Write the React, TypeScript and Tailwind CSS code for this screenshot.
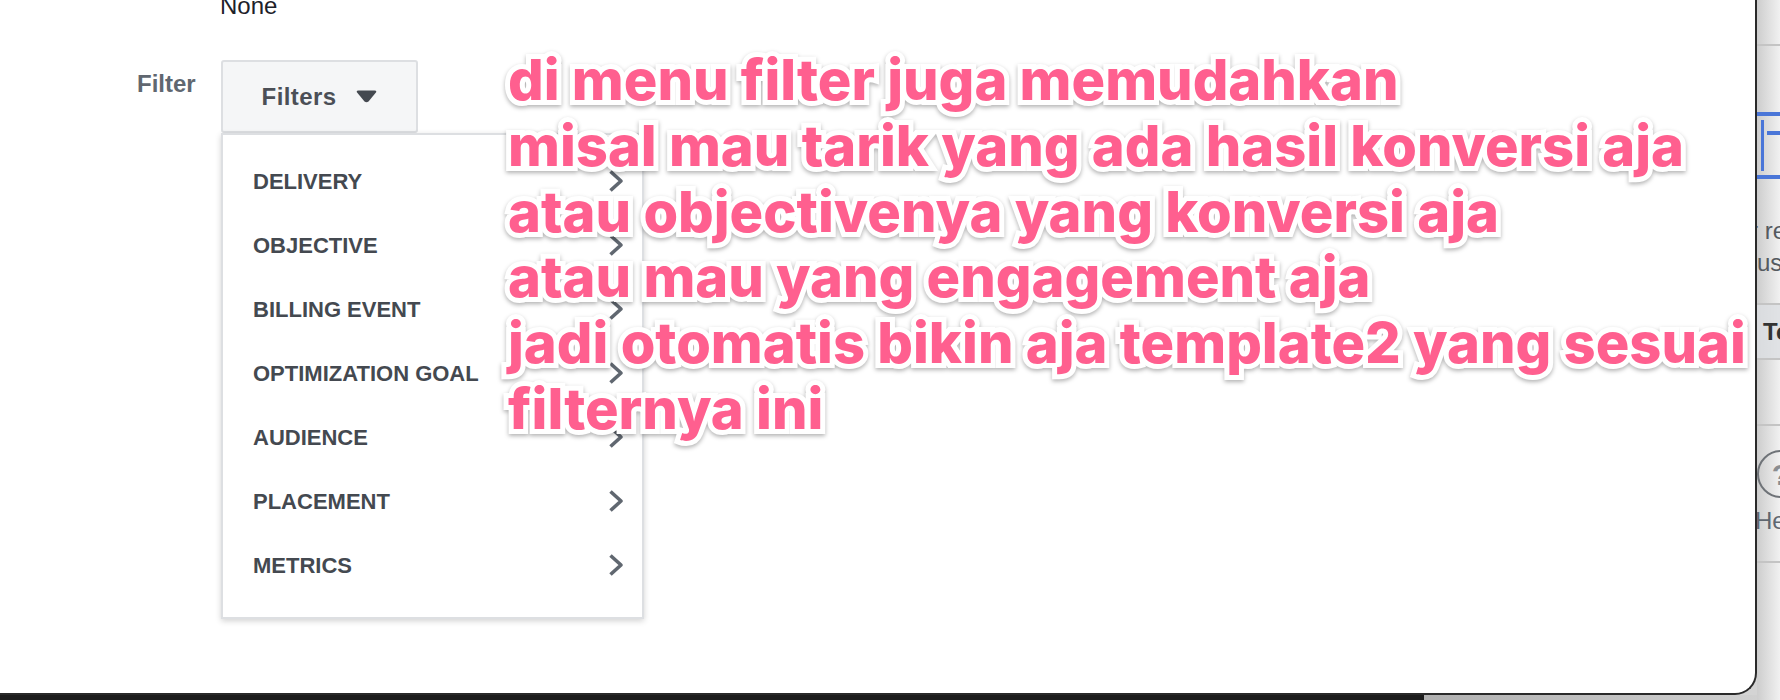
const font = "font-['Liberation_Sans',Arial,sans-serif]";

const menuItems = [
  "DELIVERY",
  "OBJECTIVE",
  "BILLING EVENT",
  "OPTIMIZATION GOAL",
  "AUDIENCE",
  "PLACEMENT",
  "METRICS",
];

const noteLines = [
  "di menu filter juga memudahkan",
  "misal mau tarik yang ada hasil konversi aja",
  "atau objectivenya yang konversi aja",
  "atau mau yang engagement aja",
  "jadi otomatis bikin aja template2 yang sesuai",
  "filternya ini",
];

function Chevron() {
  return (
    <svg width="16" height="24" viewBox="0 0 16 24" fill="none" className="shrink-0">
      <path
        d="M2.5 2.5 L13 12 L2.5 21.5"
        stroke="#606770"
        strokeWidth="3.6"
        strokeLinejoin="round"
      />
    </svg>
  );
}

function Caret() {
  return (
    <svg width="21" height="13" viewBox="0 0 21 13" className="shrink-0">
      <path
        d="M2.5 0.5 H18.5 Q21.5 0.5 19.5 3 L12.5 11.5 Q10.5 13 8.5 11.5 L1.5 3 Q-0.5 0.5 2.5 0.5 Z"
        fill="#444950"
      />
    </svg>
  );
}

function FilterMenu() {
  return (
    <div className="w-[423px] h-[486px] bg-white border-2 border-[#dddfe2] shadow-[0_2px_6px_rgba(0,0,0,0.18)] pt-[14px]">
      {menuItems.map((item) => (
        <div
          key={item}
          className="h-[64px] flex items-center justify-between pl-[30px] pr-[18px]"
        >
          <span className="text-[22px] font-bold text-[#444950]">{item}</span>
          <Chevron />
        </div>
      ))}
    </div>
  );
}

function SideStrip() {
  return (
    <div className="w-[23px] h-[700px] overflow-hidden flex flex-col bg-gradient-to-r from-[#cdcdcd] to-[#f1f1f1]">
      <div className="h-[46px] shrink-0 border-b-2 border-[#c4c4c4]" />
      <div className="h-[66px] shrink-0" />
      <div className="h-[67px] shrink-0 border-y-4 border-[#4a76d8] relative">
        <div className="absolute left-[4px] top-[4px] bottom-[4px] w-[3px] bg-[#4a76d8]" />
        <div className="absolute left-[10px] top-[15px] right-0 h-[4px] bg-[#4a76d8]" />
      </div>
      <div className="h-[36px] shrink-0" />
      <div className="h-[88px] shrink-0 text-[24px] leading-[32px] text-[#555a60] -ml-[7px] whitespace-nowrap">
        <div>r re</div>
        <div className="ml-[7px]">us</div>
      </div>
      <div className="h-[57px] shrink-0 bg-[#dcdee2]/80 border-y-2 border-[#c4c4c4] pl-[6px] pt-[9px] text-[24px] font-bold text-[#333]">
        Te
      </div>
      <div className="h-[66px] shrink-0 border-b-2 border-[#c4c4c4]" />
      <div className="h-[137px] shrink-0 border-b-2 border-[#c4c4c4] pt-[24px] whitespace-nowrap">
        <div className="w-[48px] h-[48px] rounded-full border-2 border-[#6f7378] flex items-center justify-center text-[30px] font-bold text-[#8a8d91]">
          ?
        </div>
        <div className="text-[24px] leading-[28px] text-[#606770] mt-[9px] -ml-[2px]">He</div>
      </div>
    </div>
  );
}

export default function App() {
  return (
    <div className={`${font} relative w-[1780px] h-[700px] overflow-hidden flex bg-[#d4d4d4]`}>
      <div className="w-[1757px] shrink-0 flex flex-col">
        <div className="h-[695px] shrink-0 bg-white border-r-2 border-b-2 border-[#2a2a2a] rounded-br-[22px] overflow-hidden">
          <div className="pl-[220px] -mt-[12px] h-[72px] text-[24px] text-[#1d2129]">None</div>
          <div className="flex pl-[137px]">
            <div className="w-[84px] text-[24px] font-bold text-[#606770] pt-[6px]">Filter</div>
            <div className="flex flex-col">
              <div className="w-[197px] h-[73px] rounded-[3px] bg-[#f5f6f7] border-2 border-[#dddfe2] flex items-center justify-center gap-[20px] text-[24px] font-bold tracking-[0.4px] text-[#4b4f56]">
                <span>Filters</span>
                <Caret />
              </div>
              <FilterMenu />
            </div>
          </div>
        </div>
        <div className="h-[5px] flex">
          <div className="w-[1424px] bg-[#1c1c1c]" />
          <div className="flex-1 bg-gradient-to-r from-[#b0b0b0] to-[#d0d0d0]" />
        </div>
      </div>
      <SideStrip />

      {/* annotation pasted over the screenshot */}
      <div className="absolute left-[508px] top-[48px] font-['Inter',sans-serif] font-extrabold text-[56px] leading-[65.8px] whitespace-nowrap text-[#ff5f8f] [-webkit-text-stroke:10px_white] [paint-order:stroke_fill] drop-shadow-[0_2px_2px_rgba(0,0,0,0.3)]">
        {noteLines.map((line) => (
          <div key={line}>{line}</div>
        ))}
      </div>
    </div>
  );
}
